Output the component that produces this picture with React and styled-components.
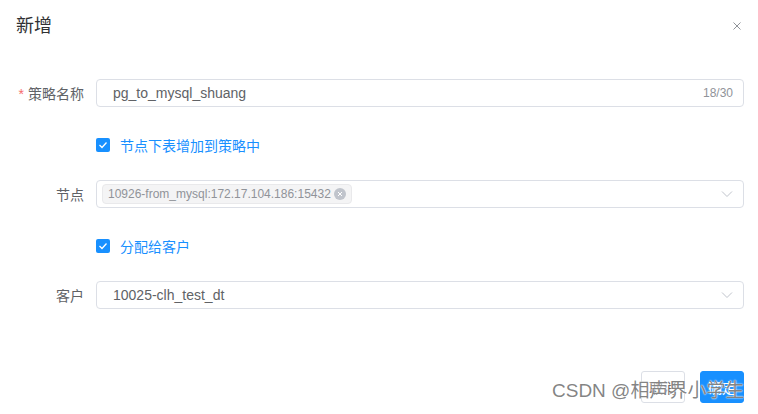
import React from "react";
import styled, { createGlobalStyle } from "styled-components";

const Global = createGlobalStyle`
  html, body { margin: 0; padding: 0; background: #fff; }
  body { font-family: "Liberation Sans", "Noto Sans CJK SC", Arial, sans-serif; }
  * { box-sizing: border-box; }
`;

const Dialog = styled.div`
  position: relative;
  width: 758px;
  height: 414px;
  background: #fff;
  overflow: hidden;
`;

const Header = styled.div`
  display: flex;
  align-items: center;
  justify-content: space-between;
  padding: 14px 15px 10px 16px;
`;

const Title = styled.span`
  font-size: 18px;
  line-height: 24px;
  color: #303133;
`;

const CloseBtn = styled.button`
  border: 0;
  background: none;
  padding: 0;
  width: 10px;
  height: 10px;
  display: flex;
  margin-right: 1px;
  cursor: pointer;
`;

const Body = styled.div`
  padding: 31px 14px 0 16px;
`;

const FormItem = styled.div`
  display: flex;
  align-items: center;
  height: 28px;
  margin-bottom: ${(p) => p.$mb}px;
`;

const Label = styled.label`
  width: 80px;
  padding-right: 12px;
  text-align: right;
  font-size: 14px;
  color: #606266;
  white-space: nowrap;
  flex: none;
`;

const Star = styled.span`
  color: #f56c6c;
  margin-right: 4px;
`;

const Field = styled.div`
  flex: 1;
  position: relative;
  height: 28px;
  border: 1px solid #dcdfe6;
  border-radius: 4px;
  display: flex;
  align-items: center;
  padding: 0 10px 0 ${(p) => p.$pl}px;
  gap: 8px;
`;

const Value = styled.span`
  flex: 1;
  font-size: 14px;
  color: #606266;
`;

const Counter = styled.span`
  font-size: 12px;
  color: #909399;
`;

const Tag = styled.span`
  display: inline-flex;
  align-items: center;
  height: 20px;
  padding: 0 5px 0 5px;
  background: #f4f4f5;
  border: 1px solid #e9e9eb;
  border-radius: 4px;
  font-size: 12px;
  color: #909399;
  gap: 3px;
`;

const TagClose = styled.span`
  width: 12px;
  height: 12px;
  border-radius: 50%;
  background: #c0c4cc;
  display: inline-flex;
  align-items: center;
  justify-content: center;
`;

const Spacer = styled.span`
  flex: 1;
`;

const CheckRow = styled.label`
  display: flex;
  align-items: center;
  gap: 10px;
  margin-left: 80px;
  font-size: 14px;
  color: #1890ff;
`;

const Box = styled.span`
  width: 14px;
  height: 14px;
  border-radius: 2px;
  background: #1890ff;
  display: inline-flex;
  align-items: center;
  justify-content: center;
`;

const Footer = styled.div`
  position: absolute;
  right: 14px;
  top: 371px;
  display: flex;
  gap: 15px;
`;

const Button = styled.button`
  width: 44px;
  height: 32px;
  padding: 0;
  border-radius: 3px;
  font-family: inherit;
  font-size: 14px;
  border: 1px solid ${(p) => (p.$primary ? "#1890ff" : "#dcdfe6")};
  background: ${(p) => (p.$primary ? "#1890ff" : "#fff")};
  color: ${(p) => (p.$primary ? "#fff" : "#606266")};
`;

const Watermark = styled.div`
  position: absolute;
  left: 552px;
  top: 381px;
  font-size: 19px;
  line-height: 19px;
  color: rgba(110, 110, 110, 0.85);
  text-shadow: 0 0 2px #fff, 0 0 1px #fff;
  white-space: nowrap;
  pointer-events: none;
`;

const Chevron = () => (
  <svg width="12" height="8" viewBox="0 0 12 8">
    <polyline points="1,1.5 6,6.5 11,1.5" fill="none" stroke="#c0c4cc" strokeWidth="1" />
  </svg>
);

const Check = () => (
  <svg width="10" height="8" viewBox="0 0 10 8">
    <polyline points="1.5,4 4,6.5 8.5,1.5" fill="none" stroke="#fff" strokeWidth="1.3" />
  </svg>
);

export default function App() {
  return (
    <>
      <Global />
      <Dialog>
        <Header>
          <Title>新增</Title>
          <CloseBtn aria-label="close">
            <svg width="10" height="10" viewBox="0 0 10 10">
              <path d="M1.5 1.5 L8.5 8.5 M8.5 1.5 L1.5 8.5" stroke="#909399" strokeWidth="1" />
            </svg>
          </CloseBtn>
        </Header>
        <Body>
          <FormItem $mb={24}>
            <Label>
              <Star>*</Star>策略名称
            </Label>
            <Field $pl={16}>
              <Value>pg_to_mysql_shuang</Value>
              <Counter>18/30</Counter>
            </Field>
          </FormItem>
          <FormItem $mb={21}>
            <CheckRow>
              <Box>
                <Check />
              </Box>
              节点下表增加到策略中
            </CheckRow>
          </FormItem>
          <FormItem $mb={24}>
            <Label>节点</Label>
            <Field $pl={5}>
              <Tag>
                10926-from_mysql:172.17.104.186:15432
                <TagClose>
                  <svg width="6" height="6" viewBox="0 0 6 6">
                    <path d="M1 1 L5 5 M5 1 L1 5" stroke="#fff" strokeWidth="1" />
                  </svg>
                </TagClose>
              </Tag>
              <Spacer />
              <Chevron />
            </Field>
          </FormItem>
          <FormItem $mb={21}>
            <CheckRow>
              <Box>
                <Check />
              </Box>
              分配给客户
            </CheckRow>
          </FormItem>
          <FormItem $mb={0}>
            <Label>客户</Label>
            <Field $pl={16}>
              <Value>10025-clh_test_dt</Value>
              <Chevron />
            </Field>
          </FormItem>
        </Body>
        <Footer>
          <Button>取消</Button>
          <Button $primary>确定</Button>
        </Footer>
        <Watermark>CSDN @相声界小学生</Watermark>
      </Dialog>
    </>
  );
}
